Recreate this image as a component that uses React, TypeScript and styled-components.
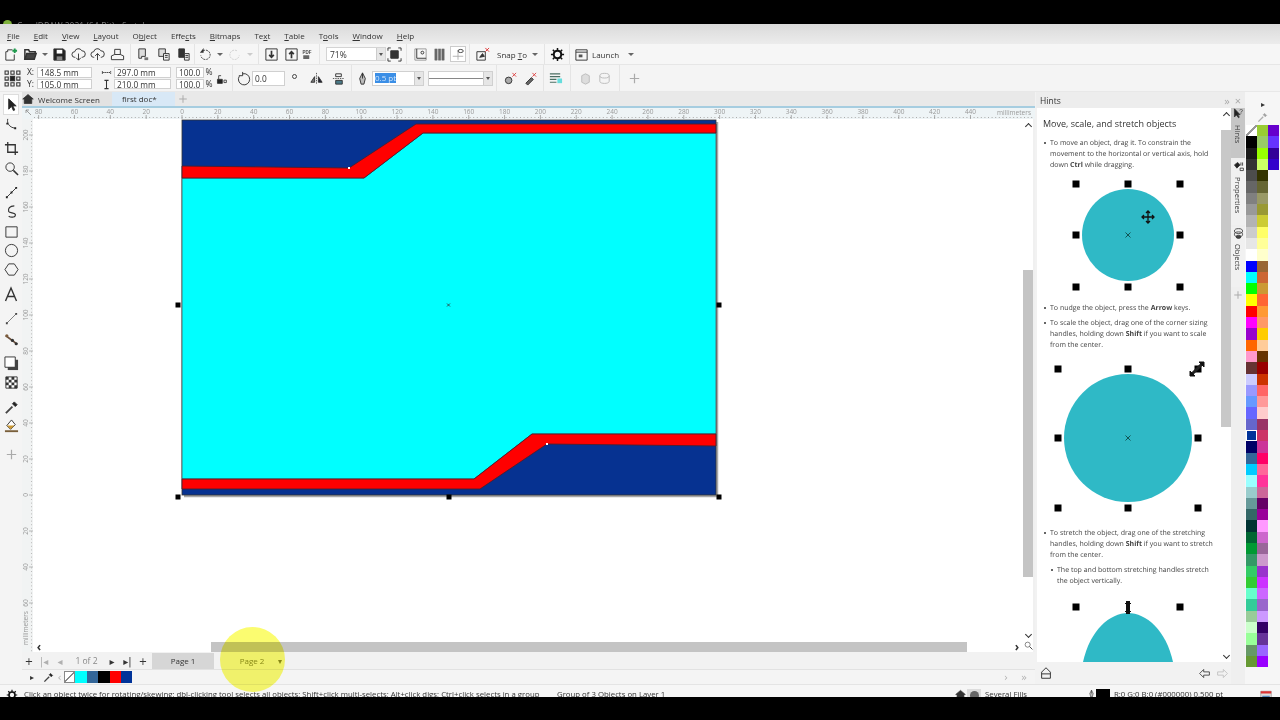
import React from 'react';
import styled, { createGlobalStyle } from 'styled-components';

const GlobalStyle = createGlobalStyle`
	html, body { margin: 0; padding: 0; background: #000; }
	* { box-sizing: border-box; }
`;

const icons: Record<string, React.ReactNode> = {
	new: (<><path d="M3 14V5h2V3h5M3 14h9V8" /><path d="M10 4h5M12.5 1.500v5" stroke="#1f9a4d" strokeWidth="2" /></>),
	open: (<><path d="M2 13V3h4l1 2h6v2" strokeWidth="1.600" /><path d="M2 13l2-6h10l-2 6z" strokeWidth="1.600" fill="#444" /></>),
	save: (<><path d="M2 2h10l2 2v10H2z" fill="#222" /><path d="M5 3h6v4H5z" fill="#fff" stroke="none" /><path d="M5 10h6v4H5z" fill="#888" stroke="none" /></>),
	cloudDown: (<><path d="M4.500 11H4a3 3 0 0 1 0-6 4 4 0 0 1 7.500-1 3.500 3.500 0 0 1 .5 7h-.5" /><path d="M8 7v7M5.500 11.500L8 14l2.500-2.500" /></>),
	cloudUp: (<><path d="M4.500 11H4a3 3 0 0 1 0-6 4 4 0 0 1 7.500-1 3.500 3.500 0 0 1 .5 7h-.5" /><path d="M8 14V7M5.500 9.500L8 7l2.500 2.500" /></>),
	print: (<path d="M5 8V2.500h6V8M1.500 13.500V9.500L5 8h6l3.500 1.500v4z" />),
	copy: (<><path d="M3 2h7v8H6v2H3z" fill="#ddd" /><path d="M9 11h4v3H9z" fill="#777" stroke="none" /></>),
	copy2: (<><path d="M3 2h7v8H3z" fill="#ddd" /><path d="M8 7h6v7H8z" fill="#eee" /><path d="M9.500 9h3M9.500 11h3" /></>),
	paste: (<><path d="M3 2h6v9H3z" fill="#333" /><path d="M9 7h5v7H9z" fill="#eee" /><path d="M10 9h3M10 11h3" /></>),
	undo: (<><path d="M5.500 4a5 5 0 1 1-2.500 5" strokeDasharray="2 1" /><path d="M6 1v5H2" strokeWidth="0" fill="#333" /></>),
	redo: (<path d="M10.500 4a5 5 0 1 0 2.500 5" stroke="#ccc" strokeDasharray="2 1" />),
	import: (<><path d="M2 2h12v12H2z" /><path d="M8 4v7M5.500 8.500L8 11l2.500-2.500" strokeWidth="1.800" /></>),
	export: (<><path d="M2 2h12v12H2z" /><path d="M8 12V5M5.500 7.500L8 5l2.500 2.500" strokeWidth="1.800" /></>),
	pdf: (<><path d="M3 9h8v5H3z" fill="#666" stroke="none" /><text x="2" y="7" fontSize="6" fontWeight="700" fill="#444" stroke="none" fontFamily="Liberation Sans, sans-serif">PDF</text></>),
	fullscreen: (<><path d="M4 4h8v8H4z" fill="#333" /><path d="M1 4V1h3M12 1h3v3M15 12v3h-3M4 15H1v-3" /></>),
	rulers: (<><path d="M2 2h12v12H2z" stroke="#999" /><path d="M4 2v10h10" /><circle cx="10" cy="6" r="1.500" /></>),
	bars: (<path d="M3 2h2.500v12H3zM6.800 2h2.500v12H6.800zM10.500 2H13v12h-2.500z" fill="#666" stroke="#666" strokeWidth=".5" />),
	snapEye: (<><path d="M8 3v11M2 10h12" stroke="#aaa" /><ellipse cx="11" cy="4" rx="3" ry="1.800" /></>),
	snapObj: (<><path d="M2 5h9v9H2z" /><path d="M5 11l3-4 2 3z" fill="#333" /><path d="M11 1l4 4M15 1l-4 4" stroke="#d33" /></>),
	launch: (<><path d="M2 3h12v11H2z" /><path d="M2 5.500h12" /><path d="M5 8h4v3H5z" fill="#555" stroke="none" /></>),
	origin: (<><path d="M1 1h3v3H1zM6.500 1h3v3h-3zM12 1h3v3h-3zM1 6.500h3v3H1zM12 6.500h3v3h-3zM1 12h3v3H1zM6.500 12h3v3h-3zM12 12h3v3h-3z" /><path d="M6 6h4v4H6z" fill="#222" /></>),
	width: (<path d="M2 8h12M2 6v4M14 6v4" strokeWidth="1.500" strokeDasharray="2 1" />),
	height: (<path d="M8 2v12M5 2h6M5 14h6" strokeWidth="1.500" />),
	lock: (<><path d="M3 9h6v5H3z" fill="#222" /><path d="M4.500 9V4.500h3M11 10h3v3h-3z" fill="none" /></>),
	rotate: (<path d="M6 3a6 6 0 1 1-3.500 2.500M6 1v4H2" />),
	mirrorH: (<><path d="M8 2v12" stroke="#555" strokeDasharray="1.500 1" /><path d="M2 12l4-6v6z" fill="#777" /><path d="M14 12l-4-6v6z" fill="#223" /></>),
	mirrorV: (<><path d="M2 8h12" stroke="#555" strokeDasharray="1.500 1" /><path d="M5 3h6v3H5z" fill="none" /><path d="M5 10h7v4H5z" fill="#4a7a88" /></>),
	pen: (<><path d="M8 2L5 8l1.500 6h3L11 8z" fill="#bbb" /><path d="M8 2v6" /></>),
	crossA: (<><circle cx="6" cy="10" r="3.500" fill="#aaa" /><path d="M10 2l4 4M14 2l-4 4" stroke="#d44" /></>),
	crossB: (<><path d="M3 13l6-6 2 2-6 6z" fill="#666" /><path d="M10 2l4 4M14 2l-4 4" stroke="#d44" /></>),
	list: (<><path d="M2 3h11M2 6h11M2 9h7M2 12h7" stroke="#4b6f63" strokeWidth="1.300" /><path d="M10 8h5v5h-5z" fill="#6dd" stroke="none" /></>),
	hatA: (<path d="M4 5l4-2 4 2v7l-4 2-4-2z" stroke="#bbb" fill="#ddd" />),
	hatB: (<><ellipse cx="8" cy="5" rx="5" ry="2.500" stroke="#bbb" /><path d="M3 5v6c0 3 10 3 10 0V5" stroke="#bbb" /></>),
	plus: (<path d="M8 3v10M3 8h10" stroke="#aaa" strokeWidth="1.300" />),
	gear: (<><circle cx="8" cy="8" r="4" strokeWidth="2.200" fill="none" stroke="#111" /><path d="M8 1v3M8 12v3M1 8h3M12 8h3M3 3l2 2M11 11l2 2M13 3l-2 2M5 11l-2 2" stroke="#111" strokeWidth="1.600" /></>),
	pick: (<path d="M5 2v11l3-3 2 4.500 1.500-.7L9.500 9.500H13z" fill="#222" />),
	shape: (<><path d="M4 2c-1 4 1 9 8 10" /><path d="M2.500 6h2v2h-2zM11 11h2v2h-2z" fill="#222" stroke="none" /></>),
	crop: (<path d="M4 1v11h11M1 4h11v11" strokeWidth="1.400" />),
	zoom: (<><circle cx="6.500" cy="6.500" r="4.500" /><path d="M10 10l5 5" strokeWidth="1.600" /></>),
	freehand: (<><path d="M3 13L13 3" /><path d="M2 12h2v2H2zM7 7h2v2H7zM12 2h2v2h-2z" fill="#222" stroke="none" /></>),
	artistic: (<path d="M11 2C6 2 4 5 5 8c1 2 6 1 7 3 1 3-4 4-7 2" strokeWidth="1.300" />),
	rect: (<path d="M2 3h12v11H2z" strokeWidth="1" />),
	ellipse: (<circle cx="8" cy="8" r="6.500" strokeWidth="1" />),
	polygon: (<path d="M5 2h6l4 6-4 6H5L1 8z" strokeWidth="1" />),
	text: (<path d="M2.500 15L8 2l5.500 13M4.500 10.500h7" strokeWidth="1.400" />),
	line: (<><path d="M3 13L13 3" stroke="#777" /><path d="M12 2h2v2h-2zM2 12h2v2H2z" fill="#444" stroke="none" /></>),
	connector: (<><path d="M2 4L14 13" strokeWidth="1.800" stroke="#6b4f3a" /><circle cx="3" cy="4" r="1.700" fill="#7c5c3c" stroke="none" /><circle cx="9" cy="9" r="1.700" fill="#333" stroke="none" /><circle cx="13" cy="12.500" r="1.700" fill="#333" stroke="none" /></>),
	shadow: (<><path d="M4 4h11v11H4z" fill="#444" stroke="none" /><path d="M1 1h11v11H1z" fill="#fff" strokeWidth="1" /></>),
	transparency: (<><path d="M2 2h12v12H2z" fill="#fff" stroke="#333" /><path d="M2 2h3v3H2zM8 2h3v3H8zM5 5h3v3H5zM11 5h3v3h-3zM2 8h3v3H2zM8 8h3v3H8zM5 11h3v3H5zM11 11h3v3h-3z" fill="#333" stroke="none" /></>),
	eyedropper: (<><path d="M2 14l7-7" strokeWidth="2" stroke="#444" /><path d="M9 4l3 3 2-2-3-3z" fill="#222" /></>),
	fill: (<><path d="M8 1L3 7l4 4 5-5z" fill="#fff" /><path d="M1 12h14v2H1z" fill="#7a5f3a" stroke="none" /><path d="M3 7h8l-4 4z" fill="#c93" stroke="none" /></>),
	home: (<path d="M1 8l7-6 7 6h-2v6H3V8z" fill="#333" />),
	houseOutline: (<path d="M3 7l5-5 5 5v7H3zM3 9h10" strokeWidth="1.100" />),
	arrowL: (<path d="M7 3L2 8l5 5v-3h7V6H7z" />),
	arrowR: (<path d="M9 3l5 5-5 5v-3H2V6h7z" stroke="#bbb" />),
	hintCursor: (<><path d="M3 1v10l2.500-2.500L8 12l1-.7-2-3h3z" fill="#222" /><text x="9" y="7" fontSize="8" fill="#333" stroke="none" fontFamily="Liberation Sans, sans-serif">?</text></>),
	propsIcon: (<><path d="M3 6l4-3 3 3-4 4z" fill="#222" /><path d="M10 10h4v3h-4z" /><path d="M11 3v4M13 3v4" /></>),
	objectsIcon: (<><ellipse cx="8" cy="5" rx="5" ry="3" /><ellipse cx="8" cy="9" rx="5" ry="3" /><ellipse cx="8" cy="12" rx="3" ry="2" fill="#444" /></>),
	flag: (<><path d="M1 3h14v11H1z" fill="#ddd" stroke="#999" /><path d="M1 3h14v3H1z" fill="#d33" stroke="none" /><path d="M3 9h10v3H3z" fill="#58b" stroke="none" /></>),
};

const Ico: React.FC<{ name: string; size?: number }> = ({ name, size = 15 }) => (
	<svg width={size} height={size} viewBox="0 0 16 16" fill="none" stroke="#333" strokeWidth="1">
		{icons[name]}
	</svg>
);

const HRulerDrawing = () => {
	const x = (mm: number) => 160 + mm * 1.792;
	const labels: number[] = [];
	for (let v = -80; v <= 440; v += 20) labels.push(v);
	const dots: number[] = [];
	for (let d = 12; d < 1011; d += 3.6) dots.push(d);
	return (
		<svg width="1011" height="11" viewBox="0 0 1011 11">
			<path d="M4 2l5 5M4 2v3M4 2h3" stroke="#888" fill="none" strokeWidth=".8" />
			{dots.map((d) => (
				<rect key={d} x={d} y="9" width="1" height="1" fill="#aaa" />
			))}
			{labels.map((v) => (
				<g key={v}>
					<line x1={x(v)} x2={x(v)} y1="7" y2="11" stroke="#999" strokeWidth=".8" />
					<text x={x(v)} y="6" fontSize="6.500" textAnchor="middle" fill="#999" fontFamily="Open Sans, sans-serif">
						{Math.abs(v)}
					</text>
				</g>
			))}
			<text x="1009" y="7" fontSize="6.500" textAnchor="end" fill="#999" fontFamily="Open Sans, sans-serif">
				millimeters
			</text>
		</svg>
	);
};

const VRulerDrawing = () => {
	const labels: number[] = [];
	for (let v = 200; v >= -60; v -= 20) labels.push(v);
	const dots: number[] = [];
	for (let d = 2; d < 533; d += 3.6) dots.push(d);
	return (
		<svg width="11" height="533" viewBox="0 119 11 533">
			{dots.map((d) => (
				<rect key={d} x="9" y={119 + d} width="1" height="1" fill="#bbb" />
			))}
			{labels.map((v) => {
				const y = 495 - v * 1.8;
				return (
					<g key={v}>
						<line x1="7" x2="11" y1={y} y2={y} stroke="#aaa" strokeWidth=".8" />
						<text
							transform={`translate(6 ${y}) rotate(-90)`}
							fontSize="6.500"
							textAnchor="middle"
							fill="#999"
							fontFamily="Open Sans, sans-serif"
						>
							{Math.abs(v)}
						</text>
					</g>
				);
			})}
			<text
				transform="translate(6 645) rotate(-90)"
				fontSize="6.500"
				fill="#999"
				fontFamily="Open Sans, sans-serif"
			>
				millimeters
			</text>
		</svg>
	);
};

const Handle: React.FC<{ x: number; y: number; s?: number }> = ({ x, y, s = 5 }) => (
	<rect x={x - s / 2} y={y - s / 2} width={s} height={s} fill="#000" />
);

const PageDrawing = () => (
	<svg width="556" height="390" viewBox="172 119 556 390">
		<path d="M717 122v374H184" stroke="#a8a8a8" strokeWidth="2.500" fill="none" />
		<rect x="182" y="120" width="534" height="375" fill="#063291" stroke="#333" strokeWidth=".8" />
		<path
			d="M182 178H364L423 133H716V434H532L474 479H182Z"
			fill="#00ffff"
			stroke="#555"
			strokeWidth=".8"
		/>
		<path d="M182 166L349 168L416 124H716V133H423L364 178H182Z" fill="#ff0000" stroke="#4a2030" strokeWidth=".9" />
		<path d="M182 479H474L532 434H716V446L547 444H547L480 489H182Z" fill="#ff0000" stroke="#4a2030" strokeWidth=".9" />
		<rect x="348" y="167" width="2" height="2" fill="#fff" />
		<rect x="546" y="443" width="2" height="2" fill="#fff" />
		<path d="M447 303.500l3 3M450 303.500l-3 3" stroke="#333" strokeWidth=".8" />
		<Handle x={178} y={305} />
		<Handle x={719} y={305} />
		<Handle x={178} y={497} />
		<Handle x={449} y={497} />
		<Handle x={719} y={497} />
	</svg>
);

const Teal = '#2fb9c6';

const FigureMove = () => (
	<svg width="184" height="120" viewBox="1037 176 184 120">
		<circle cx="1128" cy="235" r="46" fill={Teal} />
		<path d="M1125.500 232.500l5 5M1130.500 232.500l-5 5" stroke="#155" strokeWidth="1" />
		{[1076, 1128, 1180].map((x) => (
			<Handle key={x} x={x} y={184} s={7} />
		))}
		{[1076, 1180].map((x) => (
			<Handle key={x} x={x} y={235} s={7} />
		))}
		{[1076, 1128, 1180].map((x) => (
			<Handle key={x} x={x} y={287} s={7} />
		))}
		<path
			d="M1148 211v12M1142 217h12M1146 213l2-2 2 2M1146 221l2 2 2-2M1144 215l-2 2 2 2M1152 215l2 2-2 2"
			stroke="#111"
			strokeWidth="1.300"
			fill="none"
		/>
	</svg>
);

const FigureScale = () => (
	<svg width="184" height="160" viewBox="1037 358 184 160">
		<circle cx="1128" cy="438" r="64" fill={Teal} />
		<path d="M1125.500 435.500l5 5M1130.500 435.500l-5 5" stroke="#155" strokeWidth="1" />
		{[1058, 1128, 1198].map((x) => (
			<Handle key={x} x={x} y={369} s={7} />
		))}
		{[1058, 1198].map((x) => (
			<Handle key={x} x={x} y={438} s={7} />
		))}
		{[1058, 1128, 1198].map((x) => (
			<Handle key={x} x={x} y={508} s={7} />
		))}
		<path d="M1191 375l12-12" stroke="#222" strokeWidth="3" />
		<path d="M1190 371v5h5zM1204 367v-5h-5z" fill="#111" stroke="#111" />
	</svg>
);

const FigureStretch = () => (
	<svg width="184" height="62" viewBox="1037 600 184 62">
		<path d="M1083 662C1090 630 1110 613 1128 613S1166 630 1173 662Z" fill={Teal} />
		<Handle x={1076} y={607} s={7} />
		<Handle x={1180} y={607} s={7} />
		<path d="M1128 601v13" stroke="#111" strokeWidth="4" />
		<path d="M1125 604l3-3 3 3M1125 611l3 3 3-3" stroke="#111" fill="none" />
	</svg>
);

const column1 = [
	'none', '#000000', '#1a1a1a', '#333333', '#4d4d4d', '#666666', '#808080', '#999999', '#b3b3b3', '#cccccc', '#e6e6e6', '#ffffff',
	'#0000ff', '#00ffff', '#00ff00', '#ffff00', '#ff0000', '#ff00ff', '#9900cc', '#ff6600', '#ff99cc', '#663333', '#ccccff', '#9999ff',
	'#6699ff', '#6666ff', '#6666cc', '#003399', '#000066', '#336699', '#00ccff', '#99ffff', '#99cccc', '#669999', '#336666', '#003333',
	'#006633', '#009933', '#339966', '#33cc66', '#33cc33', '#66ffcc', '#33cc99', '#99cc99', '#ccffcc', '#99ff99', '#669966', '#669933',
];
const column2 = [
	'#99cc33', '#99cc66', '#99ff00', '#ccff66', '#333300', '#666633', '#999966', '#999933', '#cccc33', '#ffff66', '#ffff99', '#ffffcc',
	'#996633', '#cc6633', '#cc9933', '#ff6633', '#ff9933', '#ff9966', '#ffcc00', '#ffcc99', '#663300', '#990000', '#cc3300', '#ff6666',
	'#ff9999', '#ffcccc', '#993366', '#cc3366', '#cc3399', '#ff0066', '#ff6699', '#ff3399', '#cc6699', '#660066', '#990099', '#ff99ff',
	'#cc66cc', '#996699', '#cc99cc', '#9933cc', '#cc33ff', '#cc66ff', '#9966cc', '#cc99ff', '#330066', '#663399', '#9966ff', '#9900ff',
];
const column3 = ['#6600cc', '#6633ff', '#330099', '#3300cc'];

const menuItems: [string, string, string][] = [
	['', 'F', 'ile'], ['', 'E', 'dit'], ['', 'V', 'iew'], ['', 'L', 'ayout'], ['O', 'b', 'ject'], ['Effe', 'c', 'ts'],
	['', 'B', 'itmaps'], ['Te', 'x', 't'], ['', 'T', 'able'], ['T', 'o', 'ols'], ['', 'W', 'indow'], ['', 'H', 'elp'],
];

const App: React.FC = () => {
	return (
		<Screen>
			<GlobalStyle />
			<TopBand>
				<TitleLogo />
				<TitleText>CorelDRAW 2021 (64-Bit) - first doc</TitleText>
			</TopBand>
			<MenuBar>
				{menuItems.map(([a, u, b]) => (
					<MenuItem key={a + u + b}>
						{a}
						<u>{u}</u>
						{b}
					</MenuItem>
				))}
			</MenuBar>
			<ToolRow>
				<Slot $w={20}><Ico name="new" /></Slot>
				<Slot $w={20}><Ico name="open" /></Slot>
				<Caret $w={9} />
				<Slot $w={20}><Ico name="save" /></Slot>
				<Slot $w={19}><Ico name="cloudDown" /></Slot>
				<Slot $w={19}><Ico name="cloudUp" /></Slot>
				<Slot $w={20}><Ico name="print" /></Slot>
				<Sep $w={6} />
				<Slot $w={20}><Ico name="copy" /></Slot>
				<Slot $w={20}><Ico name="copy2" /></Slot>
				<Slot $w={20}><Ico name="paste" /></Slot>
				<Sep $w={3} />
				<Slot $w={18}><Ico name="undo" /></Slot>
				<Caret $w={11} />
				<Slot $w={19}><Ico name="redo" /></Slot>
				<Caret $w={12} $faded />
				<Sep $w={5} />
				<Slot $w={20}><Ico name="import" /></Slot>
				<Slot $w={20}><Ico name="export" /></Slot>
				<Slot $w={12}><Ico name="pdf" size={13} /></Slot>
				<Sep $w={13} />
				<ZoomSelect>
					<span>71%</span>
					<SelectArrow />
				</ZoomSelect>
				<Slot $w={16}><Ico name="fullscreen" /></Slot>
				<Sep $w={9} />
				<Slot $w={19}><Ico name="rulers" /></Slot>
				<Slot $w={18}><Ico name="bars" /></Slot>
				<Gap $w={2} />
				<ActiveSlot><Ico name="snapEye" /></ActiveSlot>
				<Sep $w={6} />
				<Slot $w={20}><Ico name="snapObj" /></Slot>
				<Gap $w={5} />
				<ToolLabel $w={30}>Snap <u>T</u>o</ToolLabel>
				<Caret $w={16} />
				<Sep $w={3} />
				<Slot $w={22}><Ico name="gear" /></Slot>
				<Sep $w={3} />
				<Slot $w={20}><Ico name="launch" /></Slot>
				<Gap $w={1} />
				<ToolLabel $w={30}>Launch</ToolLabel>
				<Caret $w={18} />
			</ToolRow>
			<PropRow>
				<Slot $w={24}><Ico name="origin" size={17} /></Slot>
				<FieldStack $w={13}>
					<FieldLabel>X:</FieldLabel>
					<FieldLabel>Y:</FieldLabel>
				</FieldStack>
				<FieldStack $w={55}>
					<Field>148.5 mm</Field>
					<Field>105.0 mm</Field>
				</FieldStack>
				<Gap $w={6} />
				<FieldStack $w={16}>
					<Ico name="width" size={11} />
					<Ico name="height" size={11} />
				</FieldStack>
				<FieldStack $w={57}>
					<Field>297.0 mm</Field>
					<Field>210.0 mm</Field>
				</FieldStack>
				<Gap $w={5} />
				<FieldStack $w={28}>
					<Field>100.0</Field>
					<Field>100.0</Field>
				</FieldStack>
				<FieldStack $w={10}>
					<FieldLabel>%</FieldLabel>
					<FieldLabel>%</FieldLabel>
				</FieldStack>
				<Slot $w={14}><Ico name="lock" size={13} /></Slot>
				<Sep $w={8} />
				<Slot $w={16}><Ico name="rotate" /></Slot>
				<FlatField $w={33}>0.0</FlatField>
				<Slot $w={18}><Degree /></Slot>
				<Gap $w={3} />
				<Slot $w={20}><Ico name="mirrorH" /></Slot>
				<Gap $w={2} />
				<Slot $w={20}><Ico name="mirrorV" /></Slot>
				<Sep $w={6} />
				<Slot $w={16}><Ico name="pen" /></Slot>
				<Gap $w={2} />
				<OutlineSelect>
					<Highlight>0.5 pt</Highlight>
					<SelectArrow />
				</OutlineSelect>
				<Gap $w={4} />
				<LineSelect>
					<LineSample />
					<SelectArrow />
				</LineSelect>
				<Sep $w={7} />
				<Slot $w={20}><Ico name="crossA" /></Slot>
				<Slot $w={21}><Ico name="crossB" /></Slot>
				<Sep $w={5} />
				<Slot $w={18}><Ico name="list" /></Slot>
				<Sep $w={12} />
				<Slot $w={18}><Ico name="hatA" /></Slot>
				<Slot $w={20}><Ico name="hatB" /></Slot>
				<Sep $w={10} />
				<Slot $w={20}><Ico name="plus" /></Slot>
			</PropRow>
			<Workspace>
				<Toolbox>
					<ToolSlot $active><Ico name="pick" /></ToolSlot>
					<ToolSlot $mt={1}><Ico name="shape" /></ToolSlot>
					<ToolSlot $mt={5}><Ico name="crop" /></ToolSlot>
					<ToolSlot $mt={1}><Ico name="zoom" /></ToolSlot>
					<ToolSlot $mt={5}><Ico name="freehand" /></ToolSlot>
					<ToolSlot><Ico name="artistic" /></ToolSlot>
					<ToolSlot $mt={1}><Ico name="rect" /></ToolSlot>
					<ToolSlot><Ico name="ellipse" /></ToolSlot>
					<ToolSlot><Ico name="polygon" /></ToolSlot>
					<ToolSlot $mt={6}><Ico name="text" size={16} /></ToolSlot>
					<ToolSlot $mt={5}><Ico name="line" /></ToolSlot>
					<ToolSlot $mt={2}><Ico name="connector" /></ToolSlot>
					<ToolSlot $mt={5}><Ico name="shadow" /></ToolSlot>
					<ToolSlot><Ico name="transparency" /></ToolSlot>
					<ToolSlot $mt={6}><Ico name="eyedropper" /></ToolSlot>
					<ToolSlot><Ico name="fill" /></ToolSlot>
					<ToolSlot $mt={9}><Ico name="plus" /></ToolSlot>
				</Toolbox>
				<Center>
					<TabStrip>
						<HomeTab><Ico name="home" size={12} /><span>Welcome Screen</span></HomeTab>
						<DocTab>first doc*</DocTab>
						<Slot $w={16}><Ico name="plus" size={12} /></Slot>
					</TabStrip>
					<HRuler><HRulerDrawing /></HRuler>
					<CanvasArea>
						<VRuler><VRulerDrawing /></VRuler>
						<MidColumn>
							<Canvas><PageDrawing /></Canvas>
							<HScroll>
								<ScrollArrow>‹</ScrollArrow>
								<HThumb />
								<ScrollArrow>›</ScrollArrow>
							</HScroll>
						</MidColumn>
						<VScroll>
							<ScrollChevron $up />
							<VThumb />
							<ScrollChevron />
							<Ico name="zoom" size={9} />
						</VScroll>
					</CanvasArea>
					<PageNav>
						<NavBtn $w={14}>+</NavBtn>
						<NavBtn $w={16} $faded>|◂</NavBtn>
						<NavBtn $w={16} $faded>◂</NavBtn>
						<PageCount>1 of 2</PageCount>
						<NavBtn $w={14}>▸</NavBtn>
						<NavBtn $w={17}>▸|</NavBtn>
						<NavBtn $w={14}>+</NavBtn>
						<PageTab $active>Page 1</PageTab>
						<PageTab $second>Page 2<TabCaret>▾</TabCaret></PageTab>
					</PageNav>
					<DocPalette>
						<NavBtn $w={20} $small>▸</NavBtn>
						<Slot $w={13}><Ico name="eyedropper" size={11} /></Slot>
						<NavBtn $w={9} $faded>‹</NavBtn>
						<DocSwatch $c="none" />
						<DocSwatch $c="#00ffff" />
						<DocSwatch $c="#336699" />
						<DocSwatch $c="#000000" />
						<DocSwatch $c="#ff0000" />
						<DocSwatch $c="#003399" />
						<DocPaletteEnd>
							<NavBtn $w={18} $faded>›</NavBtn>
							<NavBtn $w={18} $faded>»</NavBtn>
						</DocPaletteEnd>
					</DocPalette>
				</Center>
				<Docker>
					<DockerHeader>
						<span>Hints</span>
						<DockerButtons>
							<FadedGlyph>»</FadedGlyph>
							<FadedGlyph>×</FadedGlyph>
						</DockerButtons>
					</DockerHeader>
					<DockerBody>
						<HintsColumn>
							<HintsMain>
								<HintsContent>
									<HintsTitle>Move, scale, and stretch objects</HintsTitle>
									<Bullet $mt={6.5}>
										To move an object, drag it. To constrain the
										<br />
										movement to the horizontal or vertical axis, hold
										<br />
										down <b>Ctrl</b> while dragging.
									</Bullet>
									<FigureWrap $mt={5.5}><FigureMove /></FigureWrap>
									<Bullet $mt={6.5}>To nudge the object, press the <b>Arrow</b> keys.</Bullet>
									<Bullet $mt={4}>
										To scale the object, drag one of the corner sizing
										<br />
										handles, holding down <b>Shift</b> if you want to scale
										<br />
										from the center.
									</Bullet>
									<FigureWrap $mt={7.5}><FigureScale /></FigureWrap>
									<Bullet $mt={9.5}>
										To stretch the object, drag one of the stretching
										<br />
										handles, holding down <b>Shift</b> if you want to stretch
										<br />
										from the center.
									</Bullet>
									<SubBullet>
										The top and bottom stretching handles stretch
										<br />
										the object vertically.
									</SubBullet>
									<FigureWrap $mt={13.5}><FigureStretch /></FigureWrap>
								</HintsContent>
								<HintsScroll>
									<ScrollChevron $up />
									<HintsThumb />
									<ScrollChevron />
								</HintsScroll>
							</HintsMain>
							<HintsFooter>
								<Ico name="houseOutline" size={14} />
								<FooterArrows>
									<Ico name="arrowL" size={13} />
									<Ico name="arrowR" size={13} />
								</FooterArrows>
							</HintsFooter>
						</HintsColumn>
						<DockTabs>
							<DockTab $active $h={50}><Ico name="hintCursor" size={13} /><span>Hints</span></DockTab>
							<DockTab $h={65}><Ico name="propsIcon" size={13} /><span>Properties</span></DockTab>
							<DockTab $h={60}><Ico name="objectsIcon" size={13} /><span>Objects</span></DockTab>
							<Ico name="plus" size={12} />
						</DockTabs>
					</DockerBody>
				</Docker>
				<PaletteColumn>
					<PaletteHead>
						<span>▸</span>
						<Ico name="eyedropper" size={11} />
					</PaletteHead>
					<PaletteGrid>
						<SwatchColumn>
							{column1.map((c) => (
								<Swatch key={c} $c={c} $selected={c === '#003399'} />
							))}
						</SwatchColumn>
						<SwatchColumn>
							{column2.map((c) => (
								<Swatch key={c} $c={c} />
							))}
						</SwatchColumn>
						<SwatchColumn>
							{column3.map((c) => (
								<Swatch key={c} $c={c} />
							))}
						</SwatchColumn>
					</PaletteGrid>
				</PaletteColumn>
			</Workspace>
			<StatusBar>
				<Slot $w={24}><Ico name="gear" size={12} /></Slot>
				<StatusText $w={533}>
					Click an object twice for rotating/skewing; dbl-clicking tool selects all objects; Shift+click multi-selects;
					Alt+click digs; Ctrl+click selects in a group
				</StatusText>
				<StatusText $w={396}>Group of 3 Objects on Layer 1</StatusText>
				<Slot $w={14}><Ico name="home" size={11} /></Slot>
				<StatusSwatch $c="#ddd"><StatusDot /></StatusSwatch>
				<StatusText $w={106} $indent={4}>Several Fills</StatusText>
				<Slot $w={9}><Ico name="pen" size={9} /></Slot>
				<StatusSwatch $c="#000" />
				<StatusText $w={149} $indent={4}>R:0 G:0 B:0 (#000000) 0.500 pt</StatusText>
				<Slot $w={14}><Ico name="flag" size={12} /></Slot>
			</StatusBar>
			<BottomBand />
			<Spotlight />
		</Screen>
	);
};

const uiFont = `'Open Sans', 'Noto Sans', sans-serif`;

const Screen = styled.div`
	position: relative;
	width: 1280px;
	height: 720px;
	overflow: hidden;
	display: flex;
	flex-direction: column;
	background: #f2f2f2;
	font-family: ${uiFont};
	color: #333;
`;

const TopBand = styled.div`
	height: 24px;
	background: #000;
	overflow: hidden;
	display: flex;
	align-items: flex-start;
	padding: 20px 0 0 3px;
	gap: 5px;
`;

const TitleLogo = styled.div`
	width: 9px;
	height: 9px;
	border-radius: 50%;
	background: #7fb23c;
	flex: none;
`;

const TitleText = styled.div`
	margin-top: 1px;
	font-size: 8.5px;
	line-height: 9px;
	color: #7a7a7a;
	white-space: nowrap;
`;

const MenuBar = styled.div`
	height: 20px;
	flex: none;
	display: flex;
	align-items: flex-end;
	padding: 0 0 2px 7px;
	gap: 14px;
	background: linear-gradient(#dadada, #ececec);
`;

const MenuItem = styled.span`
	font-size: 8px;
	line-height: 13px;
	color: #333;
	white-space: nowrap;
`;

const ToolRow = styled.div`
	height: 21px;
	flex: none;
	display: flex;
	align-items: center;
	background: #f6f6f6;
	border-bottom: 1px solid #e6e6e6;
`;

const PropRow = styled.div`
	height: 27px;
	flex: none;
	display: flex;
	align-items: center;
	background: #f4f4f4;
	border-bottom: 1px solid #e8e8e8;
`;

const Slot = styled.div<{ $w: number }>`
	width: ${(p) => p.$w}px;
	flex: none;
	display: flex;
	align-items: center;
	justify-content: center;
`;

const ActiveSlot = styled(Slot).attrs({ $w: 16 })`
	height: 16px;
	background: #fff;
	border: 1px solid #ccc;
`;

const Gap = styled.div<{ $w: number }>`
	width: ${(p) => p.$w}px;
	flex: none;
`;

const Sep = styled.div<{ $w: number }>`
	width: ${(p) => p.$w}px;
	flex: none;
	align-self: stretch;
	display: flex;
	justify-content: center;
	&::after {
		content: '';
		width: 1px;
		background: #e4e4e4;
	}
`;

const Caret = styled.div<{ $w: number; $faded?: boolean }>`
	width: ${(p) => p.$w}px;
	flex: none;
	display: flex;
	justify-content: center;
	&::after {
		content: '';
		border-left: 3px solid transparent;
		border-right: 3px solid transparent;
		border-top: 3px solid ${(p) => (p.$faded ? '#ccc' : '#666')};
	}
`;

const ToolLabel = styled.div<{ $w: number }>`
	width: ${(p) => p.$w}px;
	flex: none;
	font-size: 8px;
	white-space: nowrap;
`;

const SelectArrow = styled.div`
	width: 9px;
	align-self: stretch;
	flex: none;
	margin-left: auto;
	background: #e6e6e6;
	border-left: 1px solid #ccc;
	display: flex;
	align-items: center;
	justify-content: center;
	&::after {
		content: '';
		border-left: 2.5px solid transparent;
		border-right: 2.5px solid transparent;
		border-top: 3px solid #555;
	}
`;

const ZoomSelect = styled.div`
	width: 60px;
	height: 14px;
	flex: none;
	display: flex;
	align-items: center;
	background: #fff;
	border: 1px solid #d4d4d4;
	padding-left: 3px;
	font-size: 8.5px;
`;

const FieldStack = styled.div<{ $w: number }>`
	width: ${(p) => p.$w}px;
	flex: none;
	display: flex;
	flex-direction: column;
	align-items: center;
	gap: 1px;
`;

const FieldLabel = styled.div`
	height: 10.5px;
	font-size: 8.5px;
	line-height: 10.5px;
`;

const Field = styled.div`
	width: 100%;
	height: 10.5px;
	padding-left: 2px;
	background: #fff;
	border: 1px solid #d0d0d0;
	font-size: 8.3px;
	line-height: 9px;
	white-space: nowrap;
`;

const FlatField = styled.div<{ $w: number }>`
	width: ${(p) => p.$w}px;
	height: 15px;
	flex: none;
	background: #fff;
	border: 1px solid #d0d0d0;
	padding-left: 2px;
	font-size: 8.3px;
	line-height: 13px;
`;

const Degree = styled.div`
	width: 5px;
	height: 5px;
	margin-bottom: 4px;
	border-radius: 50%;
	border: 1px solid #444;
`;

const OutlineSelect = styled.div`
	width: 52px;
	height: 15px;
	flex: none;
	display: flex;
	align-items: center;
	background: #fff;
	border: 1px solid #d0d0d0;
	padding-left: 2px;
`;

const Highlight = styled.span`
	background: #3a8ee6;
	color: #cfe4fb;
	font-size: 8px;
	line-height: 10px;
`;

const LineSelect = styled.div`
	width: 65px;
	height: 15px;
	flex: none;
	display: flex;
	align-items: center;
	background: #fff;
	border: 1px solid #d0d0d0;
`;

const LineSample = styled.div`
	flex: 1;
	height: 1px;
	background: #888;
`;

const Workspace = styled.div`
	height: 592px;
	flex: none;
	display: flex;
`;

const Toolbox = styled.div`
	width: 22px;
	flex: none;
	padding-top: 2.5px;
	display: flex;
	flex-direction: column;
	align-items: center;
	background: #f4f4f4;
`;

const ToolSlot = styled.div<{ $mt?: number; $active?: boolean }>`
	width: 14px;
	height: 19px;
	flex: none;
	margin-top: ${(p) => p.$mt ?? 0}px;
	display: flex;
	align-items: center;
	justify-content: center;
	background: ${(p) => (p.$active ? '#fff' : 'transparent')};
	outline: ${(p) => (p.$active ? '1px solid #ddd' : 'none')};
	svg {
		flex: none;
	}
`;

const Center = styled.div`
	width: 1013px;
	flex: none;
	display: flex;
	flex-direction: column;
`;

const TabStrip = styled.div`
	height: 16px;
	flex: none;
	display: flex;
	align-items: stretch;
	background: #e9e9e9;
	border-bottom: 2px solid #a6cde0;
`;

const HomeTab = styled.div`
	width: 90px;
	flex: none;
	display: flex;
	align-items: center;
	gap: 4px;
	font-size: 8px;
	background: #e2e2e2;
	span {
		white-space: nowrap;
	}
`;

const DocTab = styled.div`
	width: 63px;
	flex: none;
	padding-left: 10px;
	font-size: 8px;
	line-height: 14px;
	background: #d8e8f6;
`;

const HRuler = styled.div`
	height: 11px;
	flex: none;
	display: flex;
	background: #eef4f6;
`;

const CanvasArea = styled.div`
	height: 533px;
	flex: none;
	display: flex;
`;

const VRuler = styled.div`
	width: 11px;
	flex: none;
	background: #f1f3f3;
	display: flex;
`;

const MidColumn = styled.div`
	width: 990px;
	flex: none;
	display: flex;
	flex-direction: column;
`;

const Canvas = styled.div`
	height: 523px;
	flex: none;
	padding-left: 139px;
	background: #fff;
	overflow: hidden;
	svg {
		display: block;
	}
`;

const HScroll = styled.div`
	height: 10px;
	flex: none;
	display: flex;
	align-items: stretch;
	background: #fff;
	justify-content: space-between;
`;

const ScrollArrow = styled.div`
	width: 12px;
	flex: none;
	font-size: 12px;
	font-weight: 700;
	line-height: 9px;
	text-align: center;
	color: #333;
`;

const HThumb = styled.div`
	width: 756px;
	margin-left: 166px;
	margin-right: auto;
	background: #c4c4c4;
`;

const VScroll = styled.div`
	width: 12px;
	flex: none;
	display: flex;
	flex-direction: column;
	align-items: center;
	background: #fff;
	border-right: 2px solid #f0f0f0;
`;

const ScrollChevron = styled.div<{ $up?: boolean }>`
	width: 100%;
	height: 12px;
	flex: none;
	display: flex;
	align-items: center;
	justify-content: center;
	&::after {
		content: '';
		width: 4px;
		height: 4px;
		border-left: 1.5px solid #333;
		border-top: 1.5px solid #333;
		transform: ${(p) => (p.$up ? 'translateY(1px) rotate(45deg)' : 'translateY(-1px) rotate(225deg)')};
	}
`;

const VThumb = styled.div`
	width: 10px;
	height: 307px;
	margin-top: 139px;
	margin-bottom: 52px;
	flex: none;
	background: #c4c4c4;
`;

const PageNav = styled.div`
	height: 16px;
	flex: none;
	margin-top: 1px;
	display: flex;
	align-items: stretch;
	background: #f2f2f2;
`;

const NavBtn = styled.div<{ $w: number; $faded?: boolean; $small?: boolean }>`
	width: ${(p) => p.$w}px;
	flex: none;
	display: flex;
	align-items: center;
	justify-content: center;
	font-size: ${(p) => (p.$small ? 8 : 10)}px;
	color: ${(p) => (p.$faded ? '#b0b0b0' : '#333')};
	font-family: 'DejaVu Sans', sans-serif;
`;

const PageCount = styled.div`
	width: 37px;
	flex: none;
	text-align: center;
	font-size: 8.5px;
	line-height: 16px;
	color: #888;
`;

const PageTab = styled.div<{ $active?: boolean; $second?: boolean }>`
	width: ${(p) => (p.$second ? 76 : 62)}px;
	flex: none;
	position: relative;
	margin-left: ${(p) => (p.$active ? 2 : 0)}px;
	text-align: center;
	font-size: 8px;
	line-height: 16px;
	background: ${(p) => (p.$active ? '#d6d6d6' : 'transparent')};
	color: ${(p) => (p.$second ? '#8a8a2c' : '#333')};
`;

const TabCaret = styled.span`
	position: absolute;
	right: 8px;
	top: 0;
	font-size: 8px;
`;

const DocPalette = styled.div`
	height: 15px;
	flex: none;
	display: flex;
	align-items: center;
	background: #f4f4f4;
	border-top: 1px solid #e2e2e2;
`;

const DocSwatch = styled.div<{ $c: string }>`
	width: 11.4px;
	height: 12px;
	flex: none;
	background: ${(p) =>
		p.$c === 'none'
			? 'linear-gradient(135deg, #fff 46%, #888 46%, #888 54%, #fff 54%)'
			: p.$c};
	border: ${(p) => (p.$c === 'none' ? '1px solid #888' : 'none')};
`;

const DocPaletteEnd = styled.div`
	margin-left: auto;
	padding-right: 2px;
	display: flex;
`;

const Docker = styled.div`
	width: 209px;
	flex: none;
	margin-left: 1px;
	display: flex;
	flex-direction: column;
`;

const DockerHeader = styled.div`
	height: 16px;
	flex: none;
	display: flex;
	align-items: center;
	justify-content: space-between;
	padding: 0 4px;
	font-size: 8.5px;
	background: #ededed;
`;

const DockerButtons = styled.div`
	display: flex;
	gap: 5px;
`;

const FadedGlyph = styled.span`
	font-size: 11px;
	line-height: 11px;
	color: #aaa;
`;

const DockerBody = styled.div`
	flex: 1;
	display: flex;
	min-height: 0;
`;

const HintsColumn = styled.div`
	width: 195px;
	flex: none;
	display: flex;
	flex-direction: column;
`;

const HintsMain = styled.div`
	height: 554px;
	flex: none;
	display: flex;
`;

const HintsContent = styled.div`
	width: 184px;
	flex: none;
	overflow: hidden;
	margin-left: 1px;
	background: #fff;
`;

const HintsTitle = styled.div`
	margin: 9px 0 0 6px;
	height: 14px;
	font-size: 9px;
	line-height: 14px;
	white-space: nowrap;
	color: #333;
`;

const Bullet = styled.div<{ $mt: number }>`
	position: relative;
	margin: ${(p) => p.$mt}px 0 0 13px;
	font-size: 7px;
	text-rendering: geometricPrecision;
	line-height: 11px;
	color: #444;
	white-space: nowrap;
	&::before {
		content: '';
		position: absolute;
		left: -6px;
		top: 4.5px;
		width: 2px;
		height: 2px;
		border-radius: 50%;
		background: #333;
	}
`;

const SubBullet = styled(Bullet).attrs({ $mt: 4 })`
	margin-left: 20px;
`;

const FigureWrap = styled.div<{ $mt: number }>`
	margin-top: ${(p) => p.$mt}px;
	svg {
		display: block;
	}
`;

const HintsScroll = styled.div`
	width: 10px;
	flex: none;
	display: flex;
	flex-direction: column;
	align-items: center;
	background: #fff;
`;

const HintsThumb = styled.div`
	width: 10px;
	height: 297px;
	margin-top: 10px;
	margin-bottom: 223px;
	flex: none;
	background: #c8c8c8;
`;

const HintsFooter = styled.div`
	flex: 1;
	display: flex;
	align-items: center;
	justify-content: space-between;
	padding: 0 2px 0 3px;
	background: #f2f2f2;
`;

const FooterArrows = styled.div`
	display: flex;
	gap: 5px;
`;

const DockTabs = styled.div`
	width: 14px;
	flex: none;
	display: flex;
	flex-direction: column;
	align-items: center;
	gap: 2px;
	background: #efefef;
`;

const DockTab = styled.div<{ $active?: boolean; $h: number }>`
	width: 14px;
	height: ${(p) => p.$h}px;
	flex: none;
	display: flex;
	flex-direction: column;
	align-items: center;
	font-size: 7.5px;
	background: ${(p) => (p.$active ? '#c6c6c6' : '#f1f1f1')};
	span {
		margin-top: 4px;
		writing-mode: vertical-rl;
		line-height: 14px;
	}
`;

const PaletteColumn = styled.div`
	flex: 1;
	display: flex;
	flex-direction: column;
	background: #f6f6f6;
`;

const PaletteHead = styled.div`
	height: 33px;
	flex: none;
	padding-top: 7px;
	display: flex;
	flex-direction: column;
	align-items: center;
	gap: 4px;
	font-size: 8px;
	line-height: 9px;
	svg {
		opacity: 0.4;
	}
`;

const PaletteGrid = styled.div`
	display: flex;
	padding-left: 1px;
`;

const SwatchColumn = styled.div`
	width: 11px;
	flex: none;
	display: flex;
	flex-direction: column;
`;

const Swatch = styled.div<{ $c: string; $selected?: boolean }>`
	height: 11.3px;
	flex: none;
	background: ${(p) =>
		p.$c === 'none'
			? 'linear-gradient(135deg, #fff 45%, #999 45%, #999 55%, #fff 55%)'
			: p.$c};
	outline: ${(p) => (p.$selected ? '1px solid #fff' : 'none')};
	outline-offset: -1px;
`;

const StatusBar = styled.div`
	height: 13px;
	flex: none;
	display: flex;
	align-items: flex-start;
	padding-top: 4px;
	overflow: hidden;
	background: #f6f6f6;
	border-top: 1px solid #e4e4e4;
`;

const StatusText = styled.div<{ $w: number; $indent?: number }>`
	width: ${(p) => p.$w}px;
	flex: none;
	padding-left: ${(p) => p.$indent ?? 0}px;
	font-size: 7.8px;
	line-height: 11px;
	white-space: nowrap;
`;

const StatusSwatch = styled.div<{ $c: string }>`
	width: 14px;
	height: 13px;
	flex: none;
	display: flex;
	justify-content: center;
	padding-top: 2px;
	background: ${(p) => p.$c};
`;

const StatusDot = styled.div`
	width: 9px;
	height: 9px;
	border-radius: 50%;
	background: #666;
`;

const BottomBand = styled.div`
	flex: 1;
	background: #000;
`;

const Spotlight = styled.div`
	position: absolute;
	left: 220px;
	top: 627px;
	width: 65px;
	height: 65px;
	border-radius: 50%;
	background: #fbfc70;
	mix-blend-mode: multiply;
	pointer-events: none;
`;

export default App;
